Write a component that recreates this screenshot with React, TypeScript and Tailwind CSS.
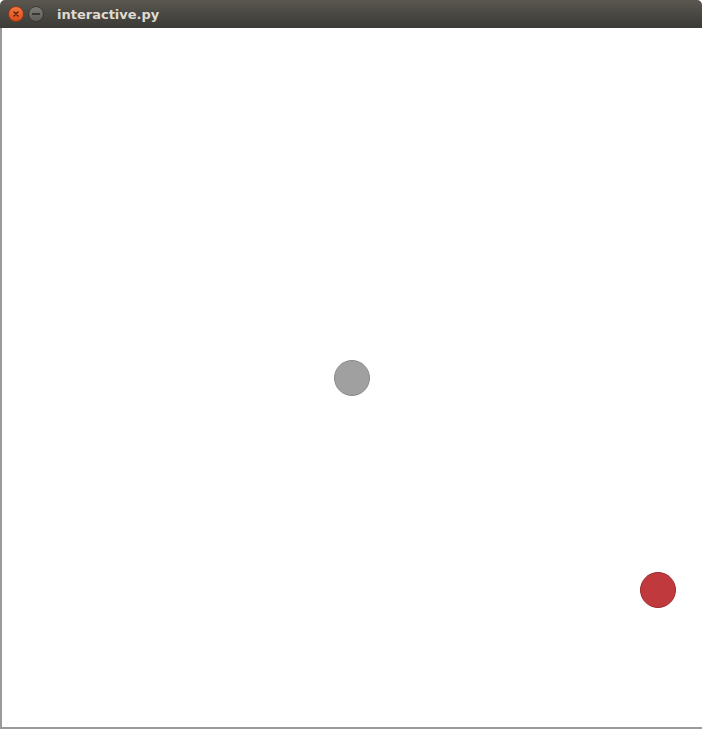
import React from "react";

export default function App() {
  return (
    <div className="w-[702px] h-[729px] bg-white flex flex-col overflow-hidden">
      <div className="h-[28px] shrink-0 rounded-t-[5px] bg-gradient-to-b from-[#5a5750] to-[#3b3a36] flex items-center pl-[8px] gap-[4px]">
        <div className="w-[16px] h-[16px] rounded-full bg-gradient-to-b from-[#f4773e] to-[#de4a17] border border-[#8a3a1a] flex items-center justify-center">
          <svg width="8" height="8" viewBox="0 0 8 8">
            <path d="M2 2 L6 6 M6 2 L2 6" stroke="#4a1a08" strokeWidth="1.3" strokeLinecap="round" />
          </svg>
        </div>
        <div className="w-[16px] h-[16px] rounded-full bg-gradient-to-b from-[#7d7b75] to-[#5f5d58] border border-[#3a3935] flex items-center justify-center">
          <div className="w-[8px] h-[1.5px] bg-[#3a3935]" />
        </div>
        <span
          className="ml-[9px] text-[13px] font-bold text-[#dfdbd2] leading-none"
          style={{ fontFamily: '"DejaVu Sans", "Noto Sans", sans-serif' }}
        >
          interactive.py
        </span>
      </div>
      <div className="relative flex-1 border-l-2 border-b-2 border-[#9a9a9a] bg-white">
        <div className="absolute left-[332px] top-[332px] w-[36px] h-[36px] rounded-full bg-[#a0a0a0] border border-[#8a8a8a]" />
        <div className="absolute left-[638px] top-[544px] w-[36px] h-[36px] rounded-full bg-[#c0393d] border border-[#9a2a2e]" />
      </div>
    </div>
  );
}
